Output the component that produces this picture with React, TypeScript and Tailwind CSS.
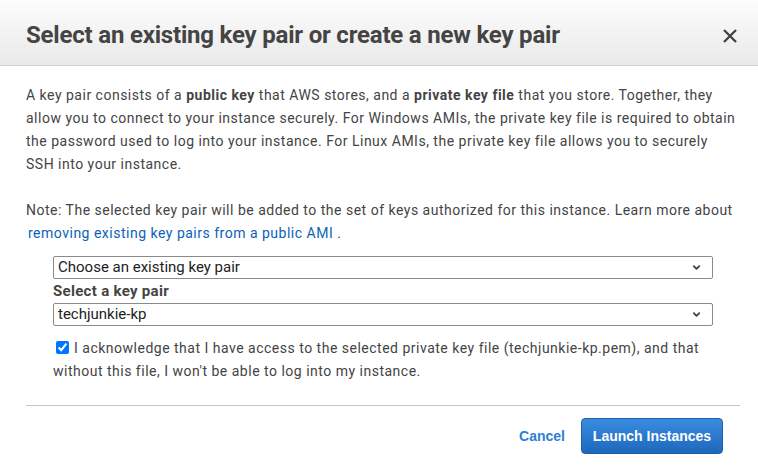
import { ChevronDown } from "lucide-react";

const SelectBox = ({ value }: { value: string }) => (
  <div className="flex h-[23px] w-[660px] items-center justify-between rounded-[2px] border border-[#8a8a8a] bg-white pl-[4px] pr-[10px] text-[15px] leading-none text-[#222]">
    <span>{value}</span>
    <ChevronDown className="h-[11px] w-[11px] text-[#444]" strokeWidth={4} />
  </div>
);

export default function App() {
  return (
    <div className="h-[471px] w-[758px] bg-white font-['Roboto',sans-serif] text-[#444]">
      {/* header */}
      <div className="flex h-[66px] items-center justify-between border-b border-[#cfcfcf] bg-gradient-to-b from-[#fdfdfd] to-[#e9e9e9] pl-[26px] pr-[20px]">
        <h1 className="pt-[4px] text-[24px] font-bold tracking-[-0.2px] text-[#444]">
          Select an existing key pair or create a new key pair
        </h1>
        <svg width="16" height="16" viewBox="0 0 16 16" className="mt-[6px]">
          <path d="M2 2 L14 14 M14 2 L2 14" stroke="#444" strokeWidth="2.4" />
        </svg>
      </div>

      {/* body */}
      <div className="pl-[26px] pr-[18px] pt-[18px] text-[14px] leading-[23px]">
        <p className="whitespace-nowrap tracking-[0.5px]">
          A key pair consists of a <b>public key</b> that AWS stores, and a <b>private key file</b> that you store. Together, they
          <br />
          allow you to connect to your instance securely. For Windows AMIs, the private key file is required to obtain
          <br />
          the password used to log into your instance. For Linux AMIs, the private key file allows you to securely
          <br />
          SSH into your instance.
        </p>
        <p className="mt-[23px] whitespace-nowrap tracking-[0.5px]">
          Note: The selected key pair will be added to the set of keys authorized for this instance. Learn more about
          <br />
          <a className="ml-[2px] text-[#0a63b8]">removing existing key pairs from a public AMI</a> .
        </p>

        <div className="mt-[11px] pl-[27px]">
          <SelectBox value="Choose an existing key pair" />
          <div className="flex h-[24px] items-center text-[15px] font-bold tracking-[0.3px]">Select a key pair</div>
          <SelectBox value="techjunkie-kp" />
          <p className="mt-[11px] whitespace-nowrap tracking-[0.5px]">
            <input type="checkbox" defaultChecked className="ml-[3px] mr-[5px] h-[13px] w-[13px] align-[-1px]" />
            I acknowledge that I have access to the selected private key file (techjunkie-kp.pem), and that
            <br />
            without this file, I won't be able to log into my instance.
          </p>
        </div>

        <div className="mt-[22px] border-t border-[#c4c4c4]" />

        <div className="mt-[12px] flex items-center justify-end gap-[16px] pr-[17px] font-['Liberation_Sans',Arial,sans-serif] text-[14px] font-bold">
          <button className="text-[#2f7fd6]">Cancel</button>
          <button className="h-[36px] w-[142px] rounded-[4px] border border-[#1d5fa8] bg-gradient-to-b from-[#3a8ce0] to-[#1c68bd] text-white">
            Launch Instances
          </button>
        </div>
      </div>
    </div>
  );
}
